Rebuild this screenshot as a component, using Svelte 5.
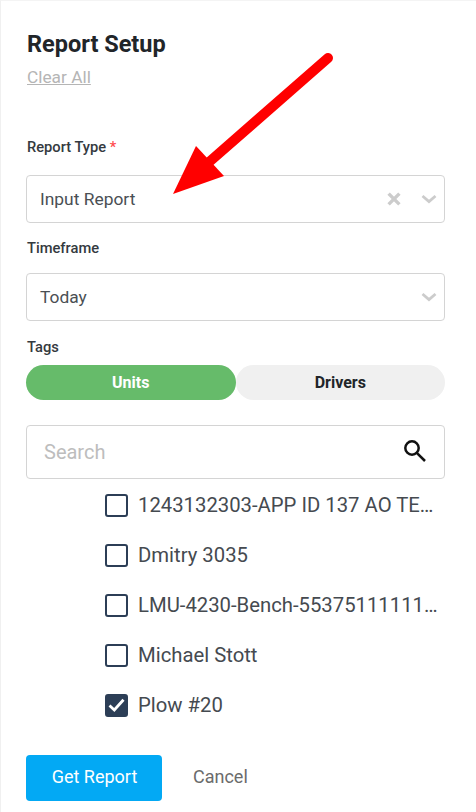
<script>
  const items = [
    { name: '1243132303-APP ID 137 AO TEST UNIT', checked: false },
    { name: 'Dmitry 3035', checked: false },
    { name: 'LMU-4230-Bench-553751111111111', checked: false },
    { name: 'Michael Stott', checked: false },
    { name: 'Plow #20', checked: true }
  ];
</script>

<div class="panel">
  <div class="head">
    <h1>Report Setup</h1>
    <a class="clear" href="#top">Clear All</a>
  </div>

  <div class="label first">Report Type <span class="req">*</span></div>
  <div class="select">
    <span class="value">Input Report</span>
    <svg class="x" width="14" height="14" viewBox="0 0 14 14"><path d="M1.6 1.6 L12.4 12.4 M12.4 1.6 L1.6 12.4" stroke="#ccc" stroke-width="3.4" fill="none"/></svg>
    <svg class="chev" width="16" height="10" viewBox="0 0 16 10"><path d="M1.5 2 L8 7.6 L14.5 2" stroke="#ccc" stroke-width="2.8" fill="none"/></svg>
  </div>

  <div class="label tf">Timeframe</div>
  <div class="select">
    <span class="value">Today</span>
    <svg class="chev" width="16" height="10" viewBox="0 0 16 10"><path d="M1.5 2 L8 7.6 L14.5 2" stroke="#ccc" stroke-width="2.8" fill="none"/></svg>
  </div>

  <div class="label tags">Tags</div>
  <div class="toggle">
    <div class="seg on">Units</div>
    <div class="seg off">Drivers</div>
  </div>

  <div class="search">
    <span class="ph">Search</span>
    <svg width="24" height="24" viewBox="0 0 24 24"><circle cx="10" cy="8" r="6.7" stroke="#111" stroke-width="2.5" fill="none"/><path d="M14.8 12.8 L23 21" stroke="#111" stroke-width="2.5" fill="none"/></svg>
  </div>

  <ul>
    {#each items as item}
      <li>
        <span class="box" class:checked={item.checked}>
          {#if item.checked}
            <svg class="tick" width="23" height="23" viewBox="0 0 23 23"><path d="M4.5 11.5 L9.3 16 L18.5 5.8" stroke="#fff" stroke-width="2.8" fill="none"/></svg>
          {/if}
        </span>
        <span class="name">{item.name}</span>
      </li>
    {/each}
  </ul>

  <div class="actions">
    <button class="primary">Get Report</button>
    <button class="cancel">Cancel</button>
  </div>

  <svg class="arrow" width="476" height="240" viewBox="0 0 476 240">
    <path d="M328 58 L208 163" stroke="#ff0000" stroke-width="10" stroke-linecap="round" fill="none"/>
    <polygon points="196,146 224,176 173,194" fill="#ff0000"/>
  </svg>
</div>

<style>
  :global(body) { margin: 0; background: #fff; }
  .panel {
    position: relative;
    box-sizing: border-box;
    width: 476px;
    height: 812px;
    padding: 30px 31px 0 25px;
    border-left: 1px solid #f0f0f0;
    border-top: 1px solid #f4f4f4;
    font-family: Roboto, "Liberation Sans", sans-serif;
    color: #3c4043;
    background: #fff;
    overflow: hidden;
  }
  .head { padding-left: 1px; }
  h1 { margin: 0; font-size: 23.5px; line-height: 26px; font-weight: 700; color: #212529; }
  .clear { display: block; margin-top: 9px; font-size: 17.3px; line-height: 22px; color: #b5b5b5; text-decoration: underline; width: max-content; }
  .label { padding-left: 1px; font-size: 14.7px; line-height: 18px; font-weight: 500; color: #343a40; }
  .label.first { margin-top: 50px; }
  .req { color: #ff4d4f; }
  .label.tf { margin-top: 16px; }
  .label.tags { margin-top: 17px; }
  .select {
    display: flex; align-items: center; box-sizing: border-box;
    height: 48px; margin-top: 19px; padding: 0 7px 0 13px;
    border: 1px solid #d4d4d4; border-radius: 4px;
  }
  .label.tf + .select { margin-top: 16px; }
  .value { flex: 1; font-size: 17.4px; color: #4a4f54; }
  .x { margin-right: 20px; }
  .toggle { display: flex; height: 35px; margin-top: 9px; }
  .seg { flex: 1; display: flex; align-items: center; justify-content: center; font-size: 16px; font-weight: 700; border-radius: 18px; }
  .seg.on { background: #66bb6a; color: #fff; }
  .seg.off { background: #f0f0f0; color: #212529; }
  .search {
    display: flex; align-items: center; justify-content: space-between; box-sizing: border-box;
    height: 54px; margin-top: 25px; padding: 0 18px 0 17px;
    border: 1px solid #d4d4d4; border-radius: 4px;
  }
  .ph { font-size: 20px; color: #bdbdbd; }
  ul { list-style: none; margin: 0; padding: 0 0 0 79px; }
  li { display: flex; align-items: center; height: 50px; gap: 10px; }
  li:first-child { margin-top: 1px; }
  .box { position: relative; box-sizing: border-box; flex: none; width: 23px; height: 23px; border: 2px solid #2c3e56; border-radius: 3px; }
  .box.checked { background: #2c3e56; }
  .tick { position: absolute; left: -2px; top: -2px; }
  .name { font-size: 20.3px; color: #454a50; white-space: nowrap; overflow: hidden; text-overflow: ellipsis; width: 300px; }
  .actions { display: flex; align-items: center; margin-top: 25px; }
  button { font-family: inherit; font-size: 18px; border: none; cursor: pointer; padding: 0 0 3px; }
  .primary { width: 136px; height: 46px; background: #03a9f4; color: #fff; border-radius: 4px; padding-left: 1px; }
  .cancel { background: none; color: #6b6b6b; margin-left: 31px; }
  .arrow { position: absolute; left: -1px; top: -1px; pointer-events: none; }
</style>
